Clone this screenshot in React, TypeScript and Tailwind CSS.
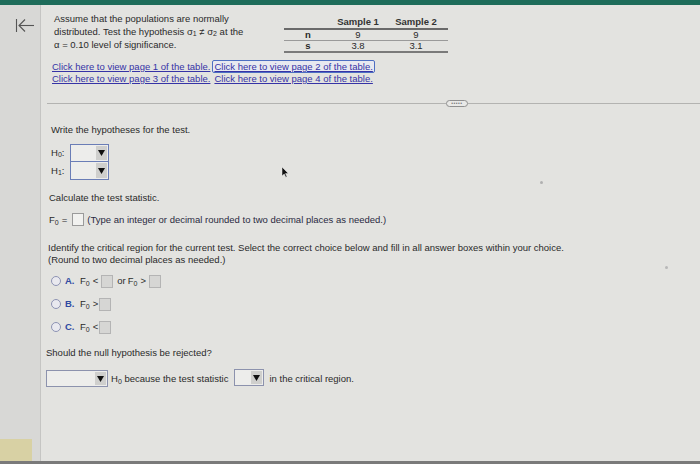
import React from "react";

function Tri() {
  return (
    <svg width="7" height="6" viewBox="0 0 7 6">
      <path d="M0 0 H7 L3.5 6 Z" fill="#111" />
    </svg>
  );
}

function Drop({ w, h = 17, border = "border-[#6f7fb0]" }: { w: number; h?: number; border?: string }) {
  return (
    <span
      className={`inline-flex items-stretch border ${border} bg-[#ededeb]`}
      style={{ width: w, height: h }}
    >
      <span className="flex-1" />
      <span className="w-[11px] my-[1px] mr-[1px] bg-[#cfcfcd] flex items-center justify-center">
        <Tri />
      </span>
    </span>
  );
}

function Box({ gray = false }: { gray?: boolean }) {
  return (
    <span
      className={`inline-block w-[12px] h-[13px] border ${
        gray ? "border-[#b4b4b4] bg-[#d6d6d4]" : "border-[#9a9a9a] bg-[#f1f1ef]"
      } align-middle`}
    />
  );
}

function Radio() {
  return <span className="inline-block w-[10px] h-[10px] rounded-full border border-[#8d93b3] bg-[#e9e9ef]" />;
}

function F0() {
  return (
    <span>
      F<sub className="text-[7px] align-baseline relative top-[2px]">0</sub>
    </span>
  );
}

export default function App() {
  return (
    <div className="w-[700px] h-[464px] flex flex-col bg-[#e3e3e0] text-[#2a2a2a] overflow-hidden relative font-['Liberation_Sans',Arial,sans-serif] text-[9.5px] leading-[12px]">
      <div className="h-[5px] bg-[#1e6c5a] shrink-0" />
      <div className="flex flex-1 min-h-0">
        {/* sidebar */}
        <div className="w-[41px] shrink-0 border-r border-[#c5c5c3] bg-[#d8d8d6] flex flex-col justify-between">
          <svg width="40" height="40" viewBox="0 0 40 40">
            <line x1="16.5" y1="14" x2="16.5" y2="27" stroke="#555" strokeWidth="1.1" />
            <line x1="19" y1="20.5" x2="34" y2="20.5" stroke="#555" strokeWidth="1.1" />
            <polyline points="25,14.5 19,20.5 25,26.5" fill="none" stroke="#555" strokeWidth="1.1" />
          </svg>
          <div className="h-[22px] w-[32px] bg-[#d8d1a4]" />
        </div>
        {/* main */}
        <div className="flex-1 flex flex-col">
          {/* header */}
          <div className="flex pt-[7px]">
            <div className="ml-[13px] w-[230px] leading-[13px]">
              Assume that the populations are normally
              <br />
              distributed. Test the hypothesis σ<sub className="text-[7px] relative top-[1px] align-baseline">1</sub> ≠ σ
              <sub className="text-[7px] relative top-[1px] align-baseline">2</sub> at the
              <br />
              α = 0.10 level of significance.
            </div>
            <div className="mt-[3px]">
              <div className="flex h-[15px] items-center border-b-[2px] border-[#6a6a6a] font-bold text-[#333]">
                <span className="w-[48px]" />
                <span className="w-[52px] text-center">Sample 1</span>
                <span className="w-[64px] text-center">Sample 2</span>
              </div>
              <div className="flex h-[11px] items-center border-b border-[#9a9a9a]">
                <span className="w-[48px] text-center font-bold">n</span>
                <span className="w-[52px] text-center">9</span>
                <span className="w-[64px] text-center">9</span>
              </div>
              <div className="flex h-[12px] items-center border-b-[2px] border-[#7a7a7a]">
                <span className="w-[48px] text-center font-bold">s</span>
                <span className="w-[52px] text-center">3.8</span>
                <span className="w-[64px] text-center">3.1</span>
              </div>
            </div>
          </div>
          {/* links */}
          <div className="ml-[11px] mt-[7px] leading-[11px] text-[#3633a6]">
            <div className="flex items-center">
              <span className="underline">Click here to view page 1 of the table.</span>
              <span className="ml-[2px] px-[1px] border border-[#4e6fc2] rounded-[2px] bg-[#e8e9f0] underline">
                Click here to view page 2 of the table.
              </span>
            </div>
            <div className="flex items-center">
              <span className="underline">Click here to view page 3 of the table.</span>
              <span className="ml-[4px] underline">Click here to view page 4 of the table.</span>
            </div>
          </div>
          {/* divider */}
          <div className="ml-[6px] mt-[16px] flex items-center">
            <div className="w-[399px] h-px bg-[#b3b3b1]" />
            <span className="w-[22px] h-[7px] rounded-full border border-[#8f8f8f] bg-[#e9e9e7] flex items-center justify-center text-[5px] leading-none tracking-[0.5px] text-[#777]">
              •••••
            </span>
            <div className="flex-1 h-px bg-[#b3b3b1]" />
          </div>
          {/* body */}
          <div className="ml-[10px] mt-[17px]">
            <div>Write the hypotheses for the test.</div>
            <div className="mt-[8px] flex">
              <div className="w-[19px] flex flex-col">
                <span className="h-[18px] flex items-center">
                  H<sub className="text-[7px] relative top-[2px] align-baseline">0</sub>:
                </span>
                <span className="h-[18px] flex items-center">
                  H<sub className="text-[7px] relative top-[2px] align-baseline">1</sub>:
                </span>
              </div>
              <div className="flex flex-col">
                <Drop w={39} h={18} border="border-[#6a7db6]" />
                <Drop w={39} h={18} border="border-[#6a7db6] border-t-0" />
              </div>
            </div>
            <div className="mt-[12px] -ml-[2px]">Calculate the test statistic.</div>
            <div className="mt-[9px] -ml-[2px] flex items-center gap-[3px]">
              <F0 />
              <span>=</span>
              <span className="ml-[2px]"><Box /></span>
              <span className="text-[#2a2a40]">(Type an integer or decimal rounded to two decimal places as needed.)</span>
            </div>
            <div className="mt-[16px] -ml-[3px]">
              Identify the critical region for the current test. Select the correct choice below and fill in all answer boxes within your choice.
              <br />
              (Round to two decimal places as needed.)
            </div>
            <div className="mt-[9px] flex flex-col gap-[11px]">
              <div className="flex items-center h-[12px]">
                <Radio />
                <span className="ml-[4px] w-[15px] font-bold text-[#2f4aa2]">A.</span>
                <F0 />
                <span className="ml-[3px] mr-[3px]">&lt;</span>
                <Box gray />
                <span className="ml-[4px]">or</span>
                <span className="ml-[2px]"><F0 /></span>
                <span className="ml-[3px] mr-[3px]">&gt;</span>
                <Box gray />
              </div>
              <div className="flex items-center h-[12px]">
                <Radio />
                <span className="ml-[4px] w-[15px] font-bold text-[#2f4aa2]">B.</span>
                <F0 />
                <span className="ml-[3px] mr-[1px]">&gt;</span>
                <Box gray />
              </div>
              <div className="flex items-center h-[12px]">
                <Radio />
                <span className="ml-[4px] w-[15px] font-bold text-[#2f4aa2]">C.</span>
                <F0 />
                <span className="ml-[3px] mr-[1px]">&lt;</span>
                <Box gray />
              </div>
            </div>
            <div className="mt-[14px] -ml-[5px]">Should the null hypothesis be rejected?</div>
            <div className="mt-[10px] -ml-[5px] flex items-center">
              <Drop w={62} h={17} border="border-[#8c92ad]" />
              <span className="ml-[3px]">
                H<sub className="text-[7px] relative top-[2px] align-baseline">0</sub> because the test statistic
              </span>
              <span className="ml-[6px]">
                <Drop w={30} h={17} border="border-[#8c92ad]" />
              </span>
              <span className="ml-[5px]">in the critical region.</span>
            </div>
          </div>
        </div>
      </div>
      <div className="h-[3px] bg-[#7a7a7a] shrink-0" />
      {/* cursor overlay */}
      <svg className="absolute left-[281px] top-[166px]" width="8" height="12" viewBox="0 0 8 12">
        <path d="M1 1 L1 10 L3.2 8 L4.8 11.3 L6 10.8 L4.5 7.6 L7.3 7.4 Z" fill="#111" stroke="#eee" strokeWidth="0.5" />
      </svg>
      <span className="absolute left-[540px] top-[181px] w-[3px] h-[3px] rounded-full bg-[#b0b0b0]" />
      <span className="absolute left-[665px] top-[266px] w-[3px] h-[3px] rounded-full bg-[#b8b8b8]" />
    </div>
  );
}
